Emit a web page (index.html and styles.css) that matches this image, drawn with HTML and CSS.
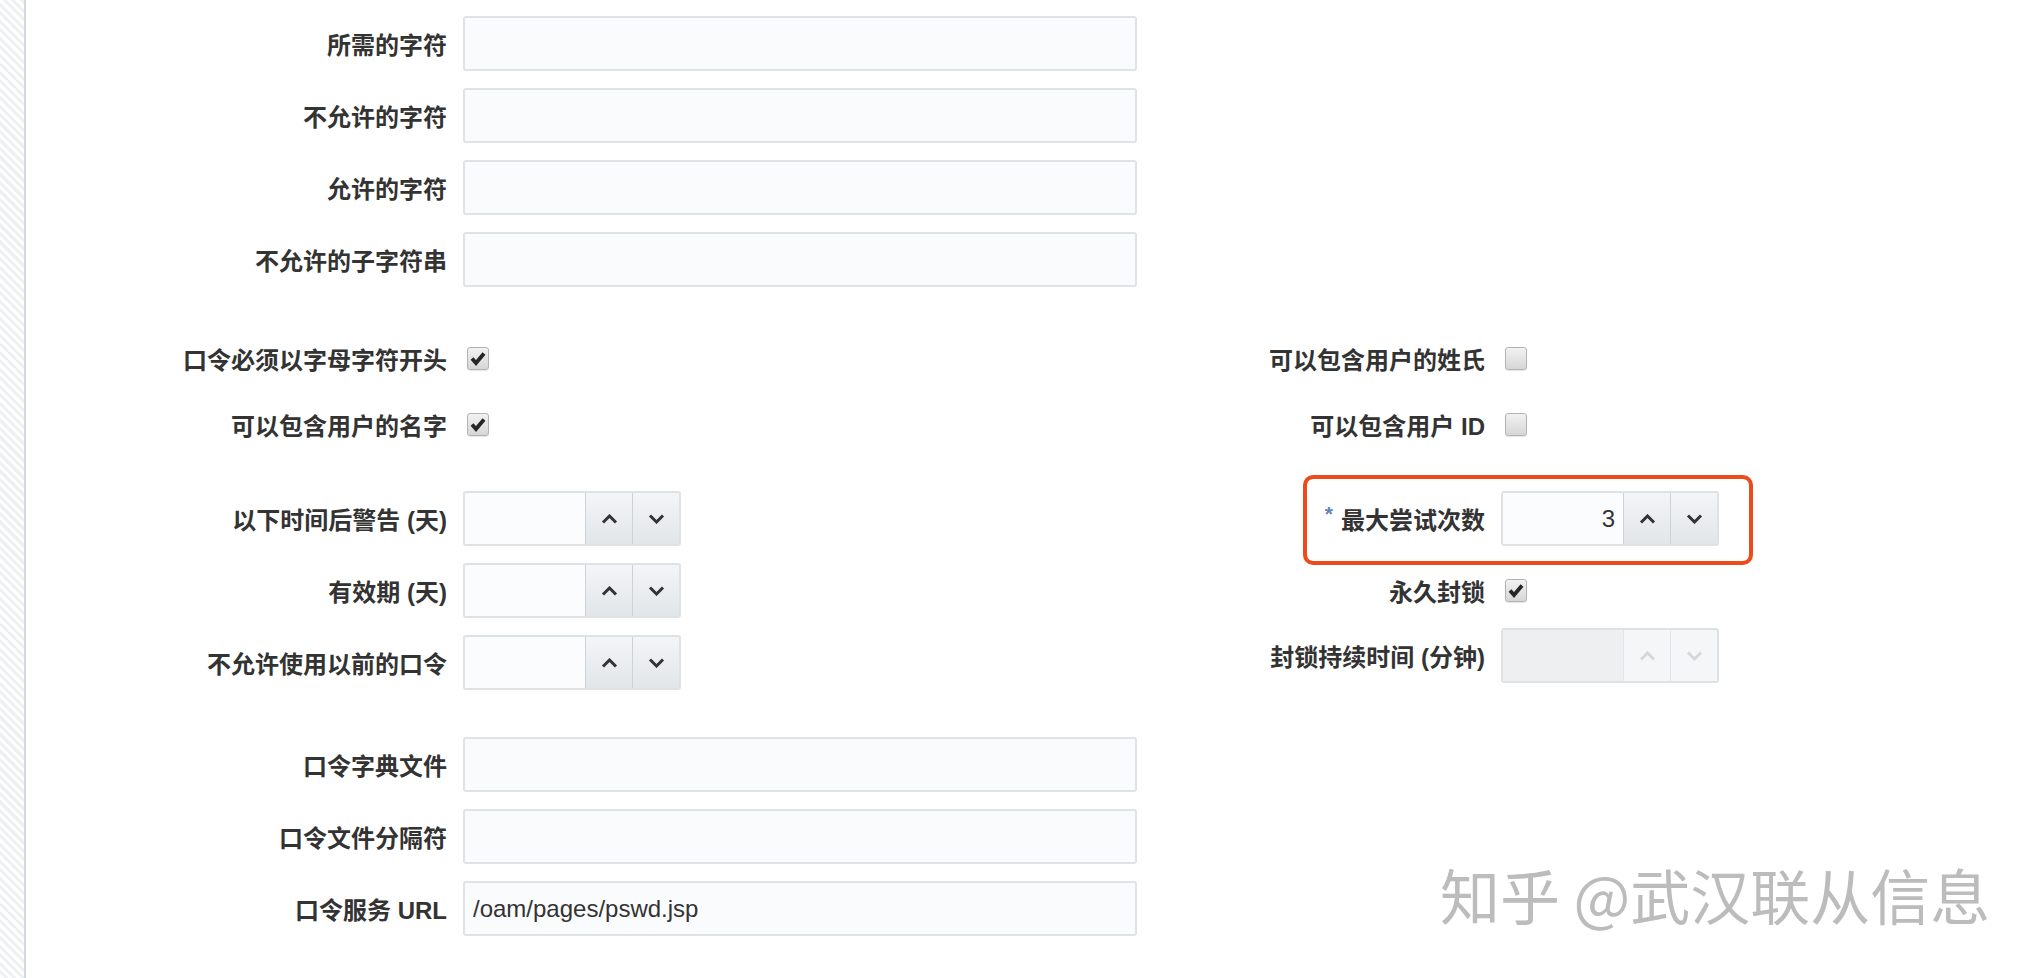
FILE: index.html
```html
<!doctype html>
<html lang="zh-CN">
<head>
    <meta charset="UTF-8">
    <meta name="viewport" content="width=device-width, initial-scale=1.0">
    <title>口令策略</title>
    <link rel="stylesheet" href="styles.css">
</head>
<body>
<div class="page">
    <aside class="side-strip"></aside>

    <main class="content">
        <!-- 字符规则 -->
        <section class="group">
            <div class="field-row">
                <label class="field-label">所需的字符</label>
                <input type="text" class="text-field">
            </div>
            <div class="field-row">
                <label class="field-label">不允许的字符</label>
                <input type="text" class="text-field">
            </div>
            <div class="field-row">
                <label class="field-label">允许的字符</label>
                <input type="text" class="text-field">
            </div>
            <div class="field-row">
                <label class="field-label">不允许的子字符串</label>
                <input type="text" class="text-field">
            </div>
        </section>

        <!-- 复选项 -->
        <section class="group group-split group-checks">
            <div class="col col-left">
                <div class="field-row row-check">
                    <label class="field-label">口令必须以字母字符开头</label>
                    <span class="check is-checked">
                        <svg width="16" height="15" viewBox="0 0 16 15"><path d="M2 7.5 L6 12 L14 2.5" fill="none" stroke="#262626" stroke-width="3.8"/></svg>
                    </span>
                </div>
                <div class="field-row row-check">
                    <label class="field-label">可以包含用户的名字</label>
                    <span class="check is-checked">
                        <svg width="16" height="15" viewBox="0 0 16 15"><path d="M2 7.5 L6 12 L14 2.5" fill="none" stroke="#262626" stroke-width="3.8"/></svg>
                    </span>
                </div>
            </div>
            <div class="col col-right">
                <div class="field-row row-check">
                    <label class="field-label">可以包含用户的姓氏</label>
                    <span class="check"></span>
                </div>
                <div class="field-row row-check">
                    <label class="field-label">可以包含用户 ID</label>
                    <span class="check"></span>
                </div>
            </div>
        </section>

        <!-- 数值项 -->
        <section class="group group-split group-spins">
            <div class="col col-left">
                <div class="field-row">
                    <label class="field-label">以下时间后警告 (天)</label>
                    <div class="spinner">
                        <input type="text" class="spin-input">
                        <button class="spin-btn"><svg width="17" height="10" viewBox="0 0 17 10"><path d="M2 8.5 L8.5 2 L15 8.5" fill="none" stroke="#333" stroke-width="3"/></svg></button>
                        <button class="spin-btn"><svg width="17" height="10" viewBox="0 0 17 10"><path d="M2 1.5 L8.5 8 L15 1.5" fill="none" stroke="#333" stroke-width="3"/></svg></button>
                    </div>
                </div>
                <div class="field-row">
                    <label class="field-label">有效期 (天)</label>
                    <div class="spinner">
                        <input type="text" class="spin-input">
                        <button class="spin-btn"><svg width="17" height="10" viewBox="0 0 17 10"><path d="M2 8.5 L8.5 2 L15 8.5" fill="none" stroke="#333" stroke-width="3"/></svg></button>
                        <button class="spin-btn"><svg width="17" height="10" viewBox="0 0 17 10"><path d="M2 1.5 L8.5 8 L15 1.5" fill="none" stroke="#333" stroke-width="3"/></svg></button>
                    </div>
                </div>
                <div class="field-row">
                    <label class="field-label">不允许使用以前的口令</label>
                    <div class="spinner">
                        <input type="text" class="spin-input">
                        <button class="spin-btn"><svg width="17" height="10" viewBox="0 0 17 10"><path d="M2 8.5 L8.5 2 L15 8.5" fill="none" stroke="#333" stroke-width="3"/></svg></button>
                        <button class="spin-btn"><svg width="17" height="10" viewBox="0 0 17 10"><path d="M2 1.5 L8.5 8 L15 1.5" fill="none" stroke="#333" stroke-width="3"/></svg></button>
                    </div>
                </div>
            </div>
            <div class="col col-right">
                <div class="field-row attempts">
                    <label class="field-label"><span class="required">*</span>最大尝试次数</label>
                    <div class="spinner">
                        <input type="text" class="spin-input" value="3">
                        <button class="spin-btn"><svg width="17" height="10" viewBox="0 0 17 10"><path d="M2 8.5 L8.5 2 L15 8.5" fill="none" stroke="#333" stroke-width="3"/></svg></button>
                        <button class="spin-btn"><svg width="17" height="10" viewBox="0 0 17 10"><path d="M2 1.5 L8.5 8 L15 1.5" fill="none" stroke="#333" stroke-width="3"/></svg></button>
                    </div>
                    <span class="highlight"></span>
                </div>
                <div class="field-row row-check">
                    <label class="field-label">永久封锁</label>
                    <span class="check is-checked">
                        <svg width="16" height="15" viewBox="0 0 16 15"><path d="M2 7.5 L6 12 L14 2.5" fill="none" stroke="#262626" stroke-width="3.8"/></svg>
                    </span>
                </div>
                <div class="field-row">
                    <label class="field-label">封锁持续时间 (分钟)</label>
                    <div class="spinner is-disabled">
                        <input type="text" class="spin-input" disabled>
                        <button class="spin-btn" disabled><svg width="17" height="10" viewBox="0 0 17 10"><path d="M2 8.5 L8.5 2 L15 8.5" fill="none" stroke="#d4d8dc" stroke-width="3"/></svg></button>
                        <button class="spin-btn" disabled><svg width="17" height="10" viewBox="0 0 17 10"><path d="M2 1.5 L8.5 8 L15 1.5" fill="none" stroke="#d4d8dc" stroke-width="3"/></svg></button>
                    </div>
                </div>
            </div>
        </section>

        <!-- 文件与服务 -->
        <section class="group group-files">
            <div class="field-row">
                <label class="field-label">口令字典文件</label>
                <input type="text" class="text-field">
            </div>
            <div class="field-row">
                <label class="field-label">口令文件分隔符</label>
                <input type="text" class="text-field">
            </div>
            <div class="field-row">
                <label class="field-label">口令服务 URL</label>
                <input type="text" class="text-field" value="/oam/pages/pswd.jsp">
            </div>
        </section>
    </main>
</div>

<div class="watermark">知乎 @武汉联从信息</div>
</body>
</html>
```

FILE: styles.css
```css
* {
    box-sizing: border-box;
}

body {
    position: relative;
    margin: 0;
    height: 978px;
    overflow: hidden;
    background: #fff;
    font-family: "Liberation Sans", "Noto Sans CJK SC", sans-serif;
    color: #333;
}

input,
button {
    font-family: inherit;
    outline: none;
}

.page {
    display: flex;
    min-height: 978px;
}

/* 左侧条纹 */
.side-strip {
    flex: none;
    width: 26px;
    background: repeating-linear-gradient(45deg, #ffffff 0 3px, #eef1f4 3px 6px);
    border-right: 2px solid #d3d9df;
}

.content {
    flex: 1;
    padding-top: 16px;
}

.group {
    display: flex;
    flex-direction: column;
    gap: 17px;
}

.group-split {
    flex-direction: row;
    gap: 16px;
}

.col {
    display: flex;
    flex-direction: column;
    gap: 17px;
}

.col-left {
    width: 1111px;
}

.field-row {
    display: flex;
    align-items: center;
    gap: 16px;
    height: 55px;
}

.field-label {
    flex: none;
    width: 421px;
    text-align: right;
    font-size: 24px;
    font-weight: 700;
    white-space: nowrap;
}

.col-right .field-label {
    width: 332px;
}

.text-field {
    width: 674px;
    height: 55px;
    padding: 0 8px;
    border: 2px solid #e0e3e6;
    border-radius: 3px;
    background: #fafbfc;
    font-size: 24px;
    color: #333;
}

/* 复选框 */
.group-checks {
    margin-top: 51px;
}

.group-checks .col {
    gap: 26px;
}

.row-check {
    height: 40px;
}

.check {
    display: flex;
    align-items: center;
    justify-content: center;
    width: 22px;
    height: 23px;
    margin-left: 4px;
    border: 1px solid #b3b3b3;
    border-radius: 3px;
    background: linear-gradient(#f2f2f2, #d6d6d6);
    box-shadow: 0 1px 1px rgba(0, 0, 0, .1);
}

/* 数值框 */
.group-spins {
    margin-top: 47px;
}

.group-spins .col-right {
    gap: 0;
}

.group-spins .col-right .row-check {
    margin: 24px 0 18px;
}

.spinner {
    display: flex;
    width: 218px;
    height: 55px;
    border: 2px solid #dfe2e5;
    border-radius: 3px;
    overflow: hidden;
}

.spin-input {
    width: 120px;
    border: none;
    padding: 0 8px;
    background: #fbfcfd;
    font-size: 24px;
    color: #333;
    text-align: right;
}

.spin-btn {
    display: flex;
    flex: 1;
    align-items: center;
    justify-content: center;
    padding: 0;
    border: none;
    border-left: 1px solid #cdd2d7;
    background: linear-gradient(#f3f5f7, #e2e6e9);
}

.spinner.is-disabled .spin-input {
    background: #edeff1;
}

.spinner.is-disabled .spin-btn {
    border-left-color: #e3e6e9;
    background: #f5f6f7;
}

/* 标注框 */
.attempts {
    position: relative;
}

.highlight {
    position: absolute;
    left: 150px;
    top: -16px;
    width: 450px;
    height: 90px;
    border: 4px solid #ef4a1c;
    border-radius: 10px;
    pointer-events: none;
}

.required {
    margin-right: 8px;
    font-size: 21px;
    font-weight: 700;
    line-height: 1;
    color: #5a86b8;
    vertical-align: 8px;
}

.group-files {
    margin-top: 47px;
}

.watermark {
    position: absolute;
    left: 1440px;
    top: 864px;
    font-family: "Noto Sans CJK SC", sans-serif;
    font-size: 60px;
    font-weight: 400;
    line-height: 1;
    color: #bcbcbc;
    text-shadow: 2px 2px 0 #fff;
    white-space: nowrap;
}
```
